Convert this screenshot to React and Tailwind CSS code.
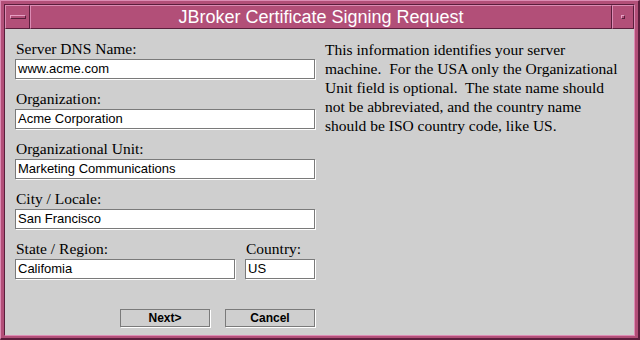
const serif = { fontFamily: '"Liberation Serif", "Times New Roman", serif' }

function Field({ label, value, className = '' }) {
  return (
    <div className={`flex flex-col ${className}`}>
      <div className="h-[20px] leading-[20px] text-[15.5px] text-black pl-px font-['Liberation_Serif',serif]">{label}</div>
      <div className="h-[20px] bg-white border border-[#7a7a7a] shadow-[1px_1px_0_#ffffff] px-[2px] text-[13px] leading-[18px] text-black font-['Liberation_Sans',Arial,sans-serif] whitespace-nowrap overflow-hidden">
        {value}
      </div>
    </div>
  )
}

function Btn({ children }) {
  return (
    <div className="w-[90px] h-[18px] border border-[#7a7a7a] shadow-[1px_1px_0_#ffffff] bg-[#cfcfcf] flex items-center justify-center text-[12px] font-bold text-black font-['Liberation_Sans',Arial,sans-serif]">
      {children}
    </div>
  )
}

export default function App() {
  return (
    <div className="w-[640px] h-[340px] bg-[#b24f78] border-t border-l border-[#dc8cb4] border-r-2 border-b-2 border-r-[#5a1e3c] border-b-[#5a1e3c] pt-[3px] pl-[3px] pr-[3px] pb-[2px]">
      <div className="w-full h-full flex flex-col border-t border-l border-[#5a1e3c] border-r border-b border-r-[#dc8cb4] border-b-[#dc8cb4]">
        {/* title bar */}
        <div className="h-[24px] flex">
          <div className="w-[25px] h-full border-t border-l border-[#dc8cb4] border-r border-b border-r-[#5a1e3c] border-b-[#5a1e3c] flex items-center justify-center">
            <div className="w-[16px] h-[4px] border-t border-l border-[#e8a0c4] border-r border-b border-r-[#5a1e3c] border-b-[#5a1e3c]" />
          </div>
          <div className="flex-1 h-full border-t border-l border-[#dc8cb4] border-r border-b border-r-[#5a1e3c] border-b-[#5a1e3c] flex items-center justify-center text-white text-[18px] leading-none font-['Liberation_Sans',Arial,sans-serif]">
            JBroker Certificate Signing Request
          </div>
          <div className="w-[22px] h-full border-t border-l border-[#dc8cb4] border-r border-b border-r-[#5a1e3c] border-b-[#5a1e3c] flex items-center justify-center">
            <div className="w-[4px] h-[4px] border-t border-l border-[#e8a0c4] border-r border-b border-r-[#5a1e3c] border-b-[#5a1e3c]" />
          </div>
        </div>
        {/* body */}
        <div className="flex-1 bg-[#cfcfcf] flex pt-[10px] pl-[10px]">
          <div className="w-[300px] flex flex-col">
            <Field label="Server DNS Name:" value="www.acme.com" />
            <Field label="Organization:" value="Acme Corporation" className="mt-[10px]" />
            <Field label="Organizational Unit:" value="Marketing Communications" className="mt-[10px]" />
            <Field label="City / Locale:" value="San Francisco" className="mt-[10px]" />
            <div className="flex gap-[10px] mt-[10px]">
              <Field label="State / Region:" value="Califomia" className="w-[220px]" />
              <Field label="Country:" value="US" className="flex-1" />
            </div>
            <div className="flex justify-end gap-[15px] mt-[30px]">
              <Btn>Next&gt;</Btn>
              <Btn>Cancel</Btn>
            </div>
          </div>
          <div className="ml-[10px] pt-[1px] text-[15.5px] leading-[19px] text-black whitespace-pre" style={serif}>
            {'This information identifies your server\nmachine.  For the USA only the Organizational\nUnit field is optional.  The state name should\nnot be abbreviated, and the country name\nshould be ISO country code, like US.'}
          </div>
        </div>
      </div>
    </div>
  )
}
